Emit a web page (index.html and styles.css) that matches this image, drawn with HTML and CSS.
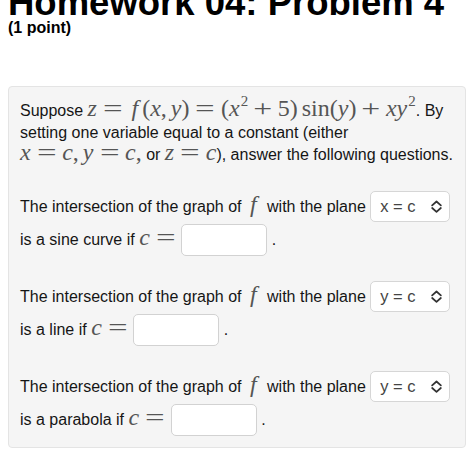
FILE: index.html
```html
<!DOCTYPE html>
<html lang="en">
<head>
<meta charset="utf-8">
<title>Homework 04: Problem 4</title>
<link rel="stylesheet" href="styles.css">
</head>
<body>
<h1 class="title">Homework 04: Problem 4</h1>
<div class="points">(1 point)</div>
<div class="problem">
  <p class="intro">Suppose <span class="m"><i>z</i><span class="r">=</span><i class="fi">f</i>(<i>x</i><span class="cm">,</span><i>y</i>)<span class="r">=</span>(<i>x</i><sup>2</sup><span class="b">+</span>5)<span class="fn">sin</span>(<i>y</i>)<span class="b">+</span><i>xy</i><sup>2</sup></span>. By<br>setting one variable equal to a constant (either<br><span class="m"><i>x</i><span class="r">=</span><i>c</i><span class="cm">,</span><i>y</i><span class="r">=</span><i>c</i>,</span> or <span class="m"><i>z</i><span class="r">=</span><i>c</i></span>), answer the following questions.</p>

  <div class="q">
    <div class="row">The intersection of the graph of <span class="m"><i class="fs">f</i></span> with the plane <span class="sel">x = c <svg class="chev" viewBox="0 0 12 12" width="13" height="13"><path d="M2 5 L6 1.4 L10 5 M2 7.4 L6 11 L10 7.4" fill="none" stroke="#333" stroke-width="1.6" stroke-linecap="round" stroke-linejoin="round"/></svg></span></div>
    <div class="row">is a sine curve if <span class="m"><i>c</i><span class="r">=</span></span><input class="ans" type="text" aria-label="answer 1"> .</div>
  </div>

  <div class="q">
    <div class="row">The intersection of the graph of <span class="m"><i class="fs">f</i></span> with the plane <span class="sel">y = c <svg class="chev" viewBox="0 0 12 12" width="13" height="13"><path d="M2 5 L6 1.4 L10 5 M2 7.4 L6 11 L10 7.4" fill="none" stroke="#333" stroke-width="1.6" stroke-linecap="round" stroke-linejoin="round"/></svg></span></div>
    <div class="row">is a line if <span class="m"><i>c</i><span class="r">=</span></span><input class="ans" type="text" aria-label="answer 2"> .</div>
  </div>

  <div class="q">
    <div class="row">The intersection of the graph of <span class="m"><i class="fs">f</i></span> with the plane <span class="sel">y = c <svg class="chev" viewBox="0 0 12 12" width="13" height="13"><path d="M2 5 L6 1.4 L10 5 M2 7.4 L6 11 L10 7.4" fill="none" stroke="#333" stroke-width="1.6" stroke-linecap="round" stroke-linejoin="round"/></svg></span></div>
    <div class="row">is a parabola if <span class="m"><i>c</i><span class="r">=</span></span><input class="ans" type="text" aria-label="answer 3"> .</div>
  </div>
</div>
</body>
</html>
```
FILE: styles.css
```css
html, body {
  background: #ffffff;
}
body {
  margin: 0;
  padding: 0 8px;
  font-family: "Liberation Sans", Arial, Helvetica, sans-serif;
  color: #151515;
}
.title {
  margin: -12.5px 0 0;
  font-size: 36.5px;
  line-height: 30px;
  font-weight: 700;
  color: #000;
  white-space: nowrap;
}
.points {
  margin-top: 0;
  font-size: 16px;
  line-height: 20px;
  font-weight: 700;
  color: #000;
}
.problem {
  margin-top: 48.5px;
  background: #f5f5f5;
  border: 1px solid #e4e4e4;
  border-radius: 4px;
  padding: 13px 10px 11px 11px;
  font-size: 16px;
}
.intro {
  margin: 0;
  line-height: 22px;
  white-space: nowrap;
}
.m {
  font-family: "Liberation Serif", "Times New Roman", serif;
  font-size: 24px;
  line-height: 16px;
  color: #555;
  white-space: nowrap;
}
.m i {
  font-style: italic;
}
.m .r {
  display: inline-block;
  transform: scaleX(1.45);
  margin: 0 9px;
}
.m .b {
  display: inline-block;
  transform: scaleX(1.4);
  margin: 0 8px;
}
.m .fi {
  margin: 0 4px 0 3px;
}
.m .fs {
  margin: 0 6px 0 4px;
}
.m .cm {
  margin-right: 4px;
}
.m .fn {
  margin-left: 4px;
}
.m sup {
  font-size: 15px;
  line-height: 0;
  vertical-align: 10px;
  margin-left: 1px;
}
.q {
  margin-top: 24px;
}
.row {
  height: 33px;
  line-height: 33px;
  white-space: nowrap;
}
.sel {
  display: inline-flex;
  align-items: center;
  justify-content: space-between;
  vertical-align: top;
  box-sizing: border-box;
  margin-top: 1px;
  width: 80px;
  height: 31px;
  padding: 0 6px 0 9px;
  background: #fff;
  border: 1px solid #d6d6d6;
  border-radius: 5px;
  color: #444;
  font-size: 16.5px;
  line-height: 1;
}
.chev {
  display: block;
}
.ans {
  display: inline-block;
  vertical-align: top;
  box-sizing: border-box;
  margin: 1px 0 0;
  width: 86px;
  height: 32px;
  padding: 0;
  background: #fff;
  border: 1px solid #d2d2d2;
  border-radius: 5px;
  font-size: 16px;
}
```
